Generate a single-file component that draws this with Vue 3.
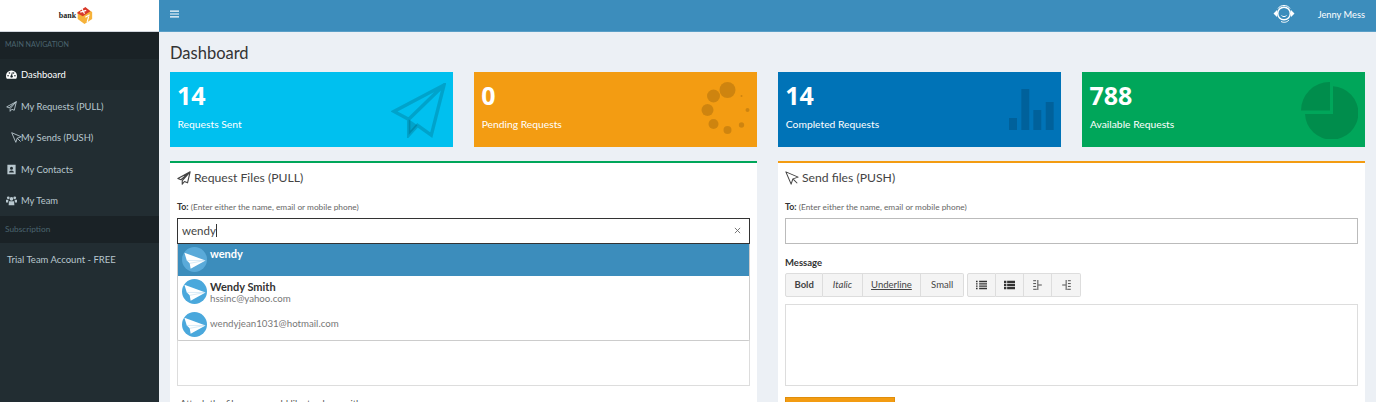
<script setup>
const stats = [
  { n: '14', label: 'Requests Sent', cls: 'sky', icon: 'plane' },
  { n: '0', label: 'Pending Requests', cls: 'amber', icon: 'spin' },
  { n: '14', label: 'Completed Requests', cls: 'blue', icon: 'bars' },
  { n: '788', label: 'Available Requests', cls: 'green', icon: 'pie' },
]
const nav = [
  { label: 'My Requests (PULL)', icon: 'plane' },
  { label: 'My Sends (PUSH)', icon: 'cursor' },
  { label: 'My Contacts', icon: 'contact' },
  { label: 'My Team', icon: 'team' },
]
const spinDots = [
  [30.5, 8, 8], [16.5, 14, 6.5], [10.5, 28, 6], [16.5, 42, 5], [30.5, 48, 4], [44.5, 43, 2.7], [50.5, 28, 2], [44.5, 14, 1],
]
const options = [
  { name: 'wendy', sub: '', active: true },
  { name: 'Wendy Smith', sub: 'hssinc@yahoo.com' },
  { name: '', sub: 'wendyjean1031@hotmail.com' },
]
</script>

<template>
  <div class="app">
    <aside class="sidebar">
      <div class="brand">
        <span class="brand-text">bank</span>
        <svg class="brand-mark" viewBox="0 0 20 20">
          <path d="M11 1 L19 6 L19 14 L10 20 L2 14 L2 6 Z" fill="#f6b23a" />
          <path d="M1 7 L11 0 L17 5 L8 11 Z" fill="#d9392b" />
          <path d="M5 6 L12 4 M7 2 L10 8 M11 12 L16 9 M13 18 L15 11" stroke="#fff" stroke-width="1.4" fill="none" />
        </svg>
      </div>
      <div class="nav-head">MAIN NAVIGATION</div>
      <a class="nav-item active">
        <svg class="nav-icon" viewBox="0 0 16 14"><path fill="currentColor" d="M8 1a8 8 0 0 0-8 8c0 1.6.4 3 1.2 4h13.6c.8-1 1.200-2.400 1.200-4a8 8 0 0 0-8-8zM3 10a1.200 1.200 0 1 1 0-2.400A1.200 1.200 0 0 1 3 10zm2-4a1.200 1.200 0 1 1 0-2.400A1.200 1.200 0 0 1 5 6zm3 5.500a1.700 1.700 0 0 1-.6-3.300L8.600 3.600h.9L9.100 8.300A1.700 1.700 0 0 1 8 11.500zM11 6a1.200 1.200 0 1 1 0-2.400A1.200 1.200 0 0 1 11 6zm2 4a1.200 1.200 0 1 1 0-2.400A1.200 1.200 0 0 1 13 10z"/></svg>
        <span>Dashboard</span>
      </a>
      <a v-for="item in nav" :key="item.label" class="nav-item">
        <svg v-if="item.icon === 'plane'" class="nav-icon" viewBox="0 0 16 16"><path fill="none" stroke="currentColor" stroke-width="1.300" stroke-linejoin="round" d="M15 1 1 8.500l3.500 1.500L15 1 6 11v4l2.500-3 3.500 1.500z"/></svg>
        <svg v-else-if="item.icon === 'cursor'" class="nav-icon shifted" viewBox="0 0 16 16"><path fill="none" stroke="currentColor" stroke-width="1.300" stroke-linejoin="round" d="M1 1l14 6-6 2-2 6zM9 9l5 5"/></svg>
        <svg v-else-if="item.icon === 'contact'" class="nav-icon" viewBox="0 0 16 16"><path fill="currentColor" fill-rule="evenodd" d="M2 1h12v14H2zM8 4a2.200 2.200 0 1 0 0 4.400A2.200 2.200 0 0 0 8 4zM4.500 12.500h7c0-2-1.500-3.200-3.500-3.200s-3.500 1.200-3.500 3.200z"/></svg>
        <svg v-else class="nav-icon" viewBox="0 0 16 14"><g fill="currentColor"><circle cx="3.300" cy="3" r="2"/><circle cx="12.700" cy="3" r="2"/><circle cx="8" cy="4.500" r="2.700"/><path d="M0 6h3.500L3 10H0zM16 6h-3.500l.5 4h3zM4.300 8h7.400l.5 6H3.800z"/></g></svg>
        <span>{{ item.label }}</span>
      </a>
      <div class="nav-head sub">Subscription</div>
      <div class="plan">Trial Team Account - FREE</div>
    </aside>

    <div class="main">
      <header class="topbar">
        <svg class="burger" viewBox="0 0 10 8"><path d="M0 .8h10M0 4h10M0 7.200h10" stroke="#fff" stroke-width="1.300" /></svg>
        <div class="top-right">
          <svg class="support" viewBox="0 0 22 18">
            <circle cx="11" cy="8.500" r="6.300" fill="none" stroke="#fff" stroke-width="1.500"/>
            <path d="M4 5 .5 8.500 4 12zM18 5l3.500 3.500L18 12z" fill="#fff"/>
            <path d="M5 3.500c2.500-4 9.500-4 12 0M8 16.500c3 1.500 6 .8 8-1.500M8.500 10.500c1.500 1.500 3.500 1.500 5 0" fill="none" stroke="#fff" stroke-width="1"/>
          </svg>
          <span class="user">Jenny Mess</span>
        </div>
      </header>

      <main class="content">
        <h1 class="title">Dashboard</h1>

        <section class="stats">
          <div v-for="s in stats" :key="s.label" class="stat" :class="s.cls">
            <div class="stat-n">{{ s.n }}</div>
            <div class="stat-l">{{ s.label }}</div>
            <svg v-if="s.icon === 'plane'" class="stat-icon plane" viewBox="0 0 56 56">
              <path fill="none" stroke="currentColor" stroke-width="3.500" stroke-linejoin="miter" d="M54 2 3 29l15 8L54 2 41 53 27 43l-9 10V37"/>
              <path fill="currentColor" d="M18 37l9 6-9 10z"/>
            </svg>
            <svg v-else-if="s.icon === 'spin'" class="stat-icon spin" viewBox="0 0 60 60">
              <circle v-for="(d, i) in spinDots" :key="i" :cx="d[0]" :cy="d[1]" :r="d[2]" fill="currentColor"/>
            </svg>
            <svg v-else-if="s.icon === 'bars'" class="stat-icon bars" viewBox="0 0 45 41">
              <g fill="currentColor"><rect x="0" y="29" width="8" height="12"/><rect x="12.300" y="0" width="8" height="41"/><rect x="24.300" y="21" width="8" height="20"/><rect x="36.700" y="13" width="8" height="28"/></g>
            </svg>
            <svg v-else class="stat-icon pie" viewBox="0 0 57 57">
              <g fill="currentColor"><path d="M32 4.300A26.700 26.700 0 1 1 4 32h28z"/><path d="M0 28.500A28.500 28.500 0 0 1 29 0v28.500z"/></g>
            </svg>
          </div>
        </section>

        <section class="panels">
          <article class="panel pull">
            <h2 class="panel-title">
              <svg viewBox="0 0 16 16"><path fill="none" stroke="currentColor" stroke-width="1.300" stroke-linejoin="round" d="M15 1 1 8.500l3.500 1.500L15 1 6 11v4l2.500-3 3.500 1.500z"/></svg>
              Request Files (PULL)
            </h2>
            <div class="to"><b>To:</b> <small>(Enter either the name, email or mobile phone)</small></div>
            <div class="combo">
              <div class="field focus">
                <span class="typed">wendy<i class="caret"></i></span>
                <svg class="clear" viewBox="0 0 8 8"><path d="M1 1l6 6M7 1 1 7" stroke="#666" stroke-width="1"/></svg>
              </div>
              <ul class="menu">
                <li v-for="o in options" :key="o.sub + o.name" class="opt" :class="{ active: o.active }">
                  <svg class="avatar" viewBox="0 0 26 26">
                    <circle cx="13" cy="13" r="13" :fill="o.active ? '#5aaad9' : '#4aa8dc'"/>
                    <path d="M2.500 6 24.500 14 9 22.500 8 17 5 14z" fill="#fff"/>
                    <path d="M5 14 24 14M8 17 24 14" stroke="#bcdcef" stroke-width=".6"/>
                  </svg>
                  <div class="opt-text" :class="{ top: o.active, solo: !o.name }">
                    <div v-if="o.name" class="opt-name">{{ o.name }}</div>
                    <div v-if="o.sub" class="opt-sub">{{ o.sub }}</div>
                  </div>
                </li>
              </ul>
            </div>
            <div class="textarea under"></div>
            <div class="cut">Attach the files you would like to share with us</div>
          </article>

          <article class="panel push">
            <h2 class="panel-title">
              <svg viewBox="0 0 16 16"><path fill="none" stroke="currentColor" stroke-width="1.200" stroke-linejoin="round" d="M1 1l14 6-6 2-2 6zM9 9l5 5"/></svg>
              Send files (PUSH)
            </h2>
            <div class="to"><b>To:</b> <small>(Enter either the name, email or mobile phone)</small></div>
            <div class="combo"><div class="field"></div></div>
            <div class="msg-label">Message</div>
            <div class="toolbar">
              <div class="group">
                <button class="b-bold">Bold</button>
                <button class="b-it">Italic</button>
                <button class="b-un">Underline</button>
                <button class="b-sm">Small</button>
              </div>
              <div class="group">
                <button class="ico"><svg viewBox="0 0 14 12"><path stroke="#333" d="M0 1.500h2M4 1.500h10M0 4.500h2M4 4.500h10M0 7.500h2M4 7.500h10M0 10.500h2M4 10.500h10" stroke-width="1.700"/></svg></button>
                <button class="ico"><svg viewBox="0 0 14 12"><path stroke="#333" d="M0 2h3M4 2h10M0 6h3M4 6h10M0 10h3M4 10h10" stroke-width="3"/></svg></button>
                <button class="ico"><svg viewBox="0 0 14 14"><path stroke="#333" fill="none" stroke-width="1.200" d="M1 1h4M1 5h4M1 9h4M1 13h5M7.500 0v14M8 7h5"/></svg></button>
                <button class="ico"><svg viewBox="0 0 14 14"><path stroke="#333" fill="none" stroke-width="1.200" d="M9 1h4M9 5h4M9 9h4M8 13h5M6.500 0v14M1 7h5"/></svg></button>
              </div>
            </div>
            <div class="textarea editor"></div>
            <button class="send" aria-label="Send"></button>
          </article>
        </section>
      </main>
    </div>
  </div>
</template>

<style>
html, body { margin: 0; height: 100%; overflow: hidden; }
</style>

<style scoped>
.app {
  display: flex; width: 1376px; height: 402px; overflow: hidden;
  font-family: Lato, "Open Sans", sans-serif; color: #333; background: #ecf0f5;
}
.sidebar { width: 159px; flex: none; background: #222d32; color: #b8c7ce; height: 402px; }
.brand { height: 32px; background: #fff; display: flex; align-items: center; justify-content: center; padding-right: 7px; box-sizing: border-box; border-bottom: 1px solid #d2d6de; }
.brand-text { font: bold 8px "Liberation Serif", serif; color: #222; }
.brand-mark { width: 17px; height: 17px; }
.nav-head { height: 26.800px; padding-left: 5px; font-size: 7.100px; line-height: 26.800px; color: #4b646f; background: #1a2226; }
.nav-head.sub { font-size: 8.300px; }
.nav-item { height: 31.500px; display: flex; align-items: center; padding-left: 6px; gap: 4px; font-size: 9.400px; color: #b8c7ce; box-sizing: border-box; }
.nav-item.active { color: #fff; background: #1e282c; }
.nav-icon { width: 11px; height: 11px; flex: none; }
.nav-icon.shifted { margin-left: 5px; margin-right: -5px; }
.plan { padding: 10px 0 0 7px; font-size: 9.500px; color: #b8c7ce; line-height: 14px; }

.main { flex: 1; min-width: 0; display: flex; flex-direction: column; }
.topbar { height: 32px; flex: none; background: #3c8dbc; border-bottom: 1px solid #5a9fc7; box-sizing: border-box; display: flex; align-items: center; justify-content: space-between; padding: 0 11px 3px; }
.burger { width: 9px; height: 8px; }
.top-right { display: flex; align-items: center; gap: 23px; }
.support { width: 22px; height: 18px; }
.user { font-size: 9.300px; color: #fff; }

.content { padding: 0 11px; }
.title { margin: 11px 0 0; font-size: 16.500px; font-weight: 400; line-height: 20px; color: #333; height: 29px; }
.stats { display: grid; grid-template-columns: repeat(4, 282.500px); column-gap: 21.670px; }
.stat { position: relative; height: 75px; color: #fff; overflow: hidden; padding: 8px 8px 0 7px; box-sizing: border-box; }
.sky { background: #00c0ef; }
.amber { background: #f39c12; }
.blue { background: #0073b7; }
.green { background: #00a65a; }
.stat-n { font-family: "Open Sans", sans-serif; font-size: 25px; font-weight: 700; line-height: 30px; }
.stat-l { margin-top: 7px; padding-left: .5px; font-size: 10.300px; line-height: 14px; }
.stat-icon { position: absolute; color: rgba(0,0,0,.15); }
.plane { right: 7px; top: 11px; width: 55px; height: 55px; }
.spin { right: 0; top: 10px; width: 60px; height: 60px; }
.bars { right: 7px; top: 17px; width: 45px; height: 41px; }
.pie { right: 7px; top: 10px; width: 57px; height: 57px; }

.panels { display: grid; grid-template-columns: repeat(2, 587px); column-gap: 21px; margin-top: 14px; }
.panel { height: 300px; background: #fff; border-top: 2px solid #00a65a; padding: 0 7px; box-sizing: border-box; overflow: hidden; }
.panel.push { border-top-color: #f39c12; }
.panel-title { display: flex; align-items: center; gap: 3px; margin: 6px 0 0; font-size: 12.200px; font-weight: 400; color: #444; line-height: 17px; }
.panel-title svg { width: 14px; height: 14px; }
.to { margin-top: 15px; font-size: 8.800px; line-height: 12px; color: #333; }
.to small { font-size: 8.300px; color: #666; }
.to b { font-weight: 700; }
.combo { position: relative; margin-top: 5px; }
.field { height: 25.500px; border: 1px solid #bbb; box-sizing: border-box; background: #fff; display: flex; align-items: center; padding: 0 8px 0 4px; justify-content: space-between; }
.field.focus { border-color: #333; position: relative; }
.typed { font-size: 11.500px; color: #444; display: inline-flex; align-items: center; }
.caret { display: inline-block; width: 1px; height: 13px; background: #333; }
.clear { width: 7px; height: 7px; }
.menu { position: absolute; left: 0; right: 0; top: 25.500px; margin: 0; padding: 0; list-style: none; background: #fff; border: 1px solid #ccc; border-top: 0; border-radius: 0 0 2px 2px; box-sizing: border-box; z-index: 2; }
.opt { height: 32.300px; display: flex; align-items: center; padding-left: 4px; gap: 3px; color: #333; }
.opt.active { background: #3c8dbc; color: #fff; }
.avatar { width: 25px; height: 25px; flex: none; }
.opt-text.top { align-self: flex-start; padding-top: 3px; }
.opt-text.solo { padding-bottom: 2px; }
.opt-name { font-size: 11px; font-weight: 700; line-height: 13px; }
.opt-sub { font-size: 9.700px; line-height: 11px; color: #777; }
.textarea { border: 1px solid #ddd; box-sizing: border-box; }
.textarea.under { height: 98px; margin-top: 44.500px; }
.cut { margin-top: 11px; padding-left: 3px; font-size: 9.500px; line-height: 14px; color: #555; }
.msg-label { margin-top: 12px; font-size: 9.500px; font-weight: 700; line-height: 13px; }
.toolbar { display: flex; gap: 3.500px; margin-top: 4px; }
.group { display: flex; }
.group button { height: 24.500px; box-sizing: border-box; border: 1px solid #ddd; border-left-width: 0; background: #f4f4f4; font-family: inherit; font-size: 9.500px; color: #444; padding: 0; }
.group button:first-child { border-left-width: 1px; border-radius: 2px 0 0 2px; }
.group button:last-child { border-radius: 0 2px 2px 0; }
.b-bold { width: 38.300px; font-weight: 700; color: #333; }
.b-it { width: 39.300px; font-style: italic; }
.b-un { width: 58.700px; text-decoration: underline; }
.b-sm { width: 42.700px; }
.group .ico { width: 28.300px; display: flex; align-items: center; justify-content: center; }
.ico svg { width: 11px; height: 10px; }
.textarea.editor { height: 82px; margin-top: 7px; }
.send { display: block; margin-top: 10.500px; width: 110px; height: 30px; background: #f39c12; border: 1px solid #e08e0b; }
</style>
